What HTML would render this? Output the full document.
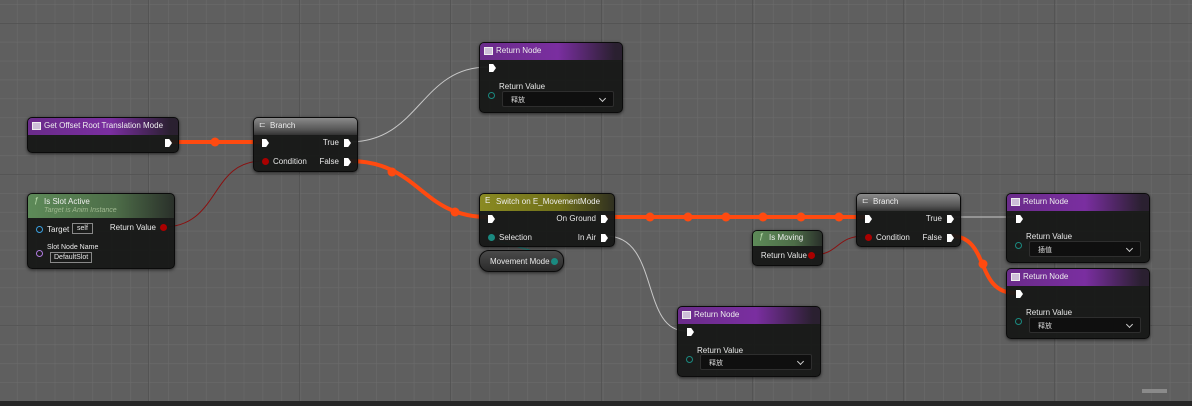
<!DOCTYPE html>
<html><head><meta charset="utf-8"><style>
*{margin:0;padding:0;box-sizing:border-box}
body{width:1192px;height:406px;overflow:hidden;background:#5f5f5f;font-family:"Liberation Sans","Noto Sans CJK SC",sans-serif;font-size:8px;color:#e8e8e8;position:relative}
svg.bg{position:absolute;left:0;top:0}
.n{position:absolute;background:rgba(22,23,22,0.94);border:1px solid #0b0b0b;border-radius:5px;box-shadow:0 1px 3px rgba(0,0,0,.6)}
.h{height:17px;border-radius:4px 4px 0 0;padding:3px 0 0 16px;font-size:8px;color:#eee;position:relative;white-space:nowrap}
.h .ic{position:absolute;left:4px;top:4px;width:9px;height:8px;background:#cdbfd8;border:1px solid #eee}
.p{background:linear-gradient(90deg,#6a2c8a,#7a2ea0 55%,#2a2030 95%)}
.g{background:linear-gradient(90deg,#5d8a58,#4d6d48 60%,#2a302a)}
.gr{background:linear-gradient(180deg,#8a8a8a,#555 70%,#333)}
.o{background:linear-gradient(90deg,#8a8a22,#6f6f1a 60%,#303020)}
.t{position:absolute;white-space:nowrap}
.ex{position:absolute;width:7px;height:8px;background:#fff;clip-path:polygon(0 0,60% 0,100% 50%,60% 100%,0 100%)}
.dd{position:absolute;background:#0f0f0f;border:1px solid #2e2e2e;border-radius:2px;height:16px;font-size:7px;padding:3px 0 0 8px;color:#ddd}
.dd:after{content:"";position:absolute;right:8px;top:4px;width:4px;height:4px;border-right:1px solid #ccc;border-bottom:1px solid #ccc;transform:rotate(45deg)}
.pin{position:absolute;width:7px;height:7px;border-radius:50%}
</style></head><body>
<svg class="bg" width="1192" height="406">
<defs>
<pattern id="mi" x="-2" y="4" width="18.9" height="18.9" patternUnits="userSpaceOnUse"><path d="M0 0H18.9M0 0V18.9" stroke="#6b6b6b" stroke-width="1.2" fill="none"/></pattern>
<pattern id="ma" x="-3" y="23" width="151" height="151" patternUnits="userSpaceOnUse"><path d="M0 0H151M0 0V151" stroke="#505050" stroke-width="1.5" fill="none"/></pattern>
</defs>
<rect width="1192" height="406" fill="url(#mi)"/>
<rect width="1192" height="406" fill="url(#ma)"/>
<rect y="401" width="1192" height="5" fill="#262626"/>
<rect x="1142" y="389" width="25" height="4" fill="#8a8a8a"/>
<g fill="none" stroke-linecap="round">
<path d="M349 142 C420 142 420 67 488 67" stroke="#c8c8c8" stroke-width="1"/>
<path d="M606 236 C660 236 640 331 686 331" stroke="#c8c8c8" stroke-width="1"/>
<path d="M951 217 H1015" stroke="#c8c8c8" stroke-width="1"/>
<path d="M163 227 C220 227 210 161 262 161" stroke="#8a1010" stroke-width="1"/>
<path d="M812 255 C840 255 835 236 865 236" stroke="#8a1010" stroke-width="1"/>
<path d="M552 260 C575 260 470 236 490 236" stroke="#1a8a80" stroke-width="1"/>
<g stroke="#ff4a10" stroke-width="4">
<path d="M170 142 H262"/>
<path d="M349 161 C420 161 420 217 488 217"/>
<path d="M606 217 H865"/>
<path d="M951 236 C990 236 975 293 1015 293"/>
</g></g>
<g fill="#ff4a10">
<circle cx="215" cy="142" r="4.5"/><circle cx="392" cy="172" r="4.5"/><circle cx="455" cy="212" r="4.5"/>
<circle cx="650" cy="217" r="4.5"/><circle cx="688" cy="217" r="4.5"/><circle cx="726" cy="217" r="4.5"/><circle cx="763" cy="217" r="4.5"/><circle cx="801" cy="217" r="4.5"/><circle cx="839" cy="217" r="4.5"/>
<circle cx="983" cy="264" r="4.5"/>
</g>
</svg>

<div class="n" style="left:27px;top:117px;width:152px;height:36px"><div class="h p"><span class="ic"></span>Get Offset Root Translation Mode</div><span class="ex" style="left:137px;top:21px"></span></div>

<div class="n" style="left:253px;top:117px;width:105px;height:55px"><div class="h gr">Branch<span style="position:absolute;left:5px;top:2px">⊏</span></div>
<span class="ex" style="left:8px;top:21px"></span><span class="t" style="right:18px;top:20px">True</span><span class="ex" style="left:90px;top:21px"></span>
<span class="pin" style="left:8px;top:40px;background:#a00"></span><span class="t" style="left:19px;top:39px">Condition</span><span class="t" style="right:18px;top:39px">False</span><span class="ex" style="left:90px;top:40px"></span></div>

<div class="n" style="left:27px;top:193px;width:148px;height:76px"><div class="h g" style="height:24px;padding-left:16px;padding-top:3px"><span style="position:absolute;left:6px;top:2px;font-style:italic;color:#bfe0b0">ƒ</span>Is Slot Active<div style="font-style:italic;color:#9fb890;font-size:7px;margin-top:1px">Target is Anim Instance</div></div>
<span class="pin" style="left:8px;top:32px;border:1.5px solid #3aa0e0"></span><span class="t" style="left:19px;top:31px">Target</span><span class="t" style="left:44px;top:29px;border:1px solid #888;padding:1px 4px;font-size:7px">self</span>
<span class="t" style="right:18px;top:29px">Return Value</span><span class="pin" style="left:132px;top:30px;background:#a00"></span>
<span class="pin" style="left:8px;top:56px;border:1.5px solid #b07ae0"></span><span class="t" style="left:19px;top:50px;font-size:7px">Slot Node Name</span><span class="t" style="left:22px;top:58px;border:1px solid #888;padding:1px 3px;font-size:7px">DefaultSlot</span></div>

<div class="n" style="left:479px;top:42px;width:144px;height:71px"><div class="h p"><span class="ic"></span>Return Node</div><span class="ex" style="left:9px;top:21px"></span><span class="t" style="left:19px;top:39px">Return Value</span><span class="pin" style="left:8px;top:49px;border:1.5px solid #1a8a80"></span><div class="dd" style="left:22px;top:48px;width:112px">释放</div></div>

<div class="n" style="left:479px;top:193px;width:136px;height:54px"><div class="h o">Switch on E_MovementMode<span style="position:absolute;left:5px;top:2px">E</span></div>
<span class="ex" style="left:8px;top:21px"></span><span class="t" style="right:18px;top:20px">On Ground</span><span class="ex" style="left:121px;top:21px"></span>
<span class="pin" style="left:8px;top:40px;background:#1a8a80"></span><span class="t" style="left:19px;top:39px">Selection</span><span class="t" style="right:18px;top:39px">In Air</span><span class="ex" style="left:121px;top:40px"></span></div>
<div class="n" style="left:479px;top:250px;width:85px;height:22px;border-radius:10px;background:linear-gradient(#4a4a4a,#2a2a2a)"><span class="t" style="left:10px;top:6px">Movement Mode</span><span class="pin" style="left:71px;top:7px;background:#1a8a80"></span></div>

<div class="n" style="left:677px;top:306px;width:144px;height:71px"><div class="h p"><span class="ic"></span>Return Node</div><span class="ex" style="left:9px;top:21px"></span><span class="t" style="left:19px;top:39px">Return Value</span><span class="pin" style="left:8px;top:49px;border:1.5px solid #1a8a80"></span><div class="dd" style="left:22px;top:47px;width:112px">释放</div></div>

<div class="n" style="left:752px;top:230px;width:71px;height:36px"><div class="h g" style="height:15px;padding-top:2px">Is Moving<span style="position:absolute;left:6px;top:1px;font-style:italic;color:#bfe0b0">ƒ</span></div><span class="t" style="right:15px;top:20px">Return Value</span><span class="pin" style="left:55px;top:21px;background:#a00"></span></div>

<div class="n" style="left:856px;top:193px;width:105px;height:54px"><div class="h gr">Branch<span style="position:absolute;left:5px;top:2px">⊏</span></div>
<span class="ex" style="left:8px;top:21px"></span><span class="t" style="right:18px;top:20px">True</span><span class="ex" style="left:90px;top:21px"></span>
<span class="pin" style="left:8px;top:40px;background:#a00"></span><span class="t" style="left:19px;top:39px">Condition</span><span class="t" style="right:18px;top:39px">False</span><span class="ex" style="left:90px;top:40px"></span></div>

<div class="n" style="left:1006px;top:193px;width:144px;height:70px"><div class="h p"><span class="ic"></span>Return Node</div><span class="ex" style="left:9px;top:21px"></span><span class="t" style="left:19px;top:38px">Return Value</span><span class="pin" style="left:8px;top:48px;border:1.5px solid #1a8a80"></span><div class="dd" style="left:22px;top:47px;width:112px">插值</div></div>

<div class="n" style="left:1006px;top:268px;width:144px;height:71px"><div class="h p"><span class="ic"></span>Return Node</div><span class="ex" style="left:9px;top:21px"></span><span class="t" style="left:19px;top:39px">Return Value</span><span class="pin" style="left:8px;top:49px;border:1.5px solid #1a8a80"></span><div class="dd" style="left:22px;top:48px;width:112px">释放</div></div>
</body></html>
